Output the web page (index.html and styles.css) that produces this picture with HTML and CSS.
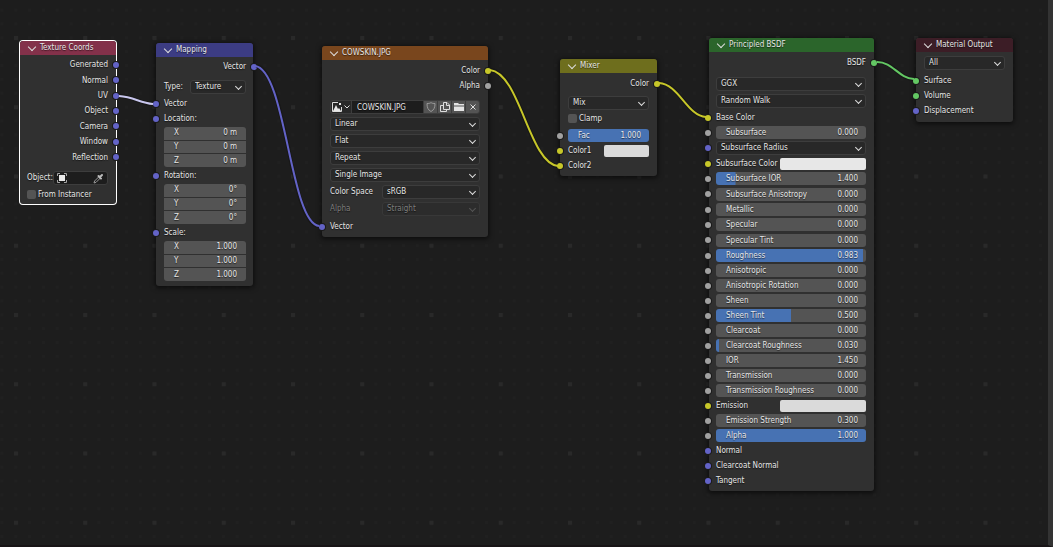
FILE: index.html
```html
<!DOCTYPE html>
<html lang="en">
<head>
  <meta charset="UTF-8">
  <meta name="viewport" content="width=device-width, initial-scale=1.0">
  <title>Shader Editor</title>
  <link rel="stylesheet" href="styles.css">
</head>
<body>
  <main class="canvas">
    <svg class="backdrop" aria-hidden="true">
      <defs>
        <pattern id="minor" x="14.2" y="36.3" width="13.85" height="13.85" patternUnits="userSpaceOnUse">
          <rect width="3" height="3" fill="#202020"/>
        </pattern>
        <pattern id="major" x="14" y="36" width="69.25" height="69.25" patternUnits="userSpaceOnUse">
          <rect width="4" height="4" fill="#292929"/>
        </pattern>
      </defs>
      <rect width="100%" height="100%" fill="url(#minor)"/>
      <rect width="100%" height="100%" fill="url(#major)"/>
    </svg>

    <section class="node selected" id="texture-coords">
      <h2 class="title red">Texture Coords</h2>
      <div class="body">
        <div class="outputs">
          <div class="row out vector">Generated</div>
          <div class="row out vector">Normal</div>
          <div class="row out vector">UV</div>
          <div class="row out vector">Object</div>
          <div class="row out vector">Camera</div>
          <div class="row out vector">Window</div>
          <div class="row out vector">Reflection</div>
        </div>
        <div class="split object-row">
          <span>Object:</span>
          <button class="picker" aria-label="Pick object">
            <svg width="10" height="10" viewBox="0 0 10 10"><path d="M.5 3V.5H3M7 .5h2.500V3M9.500 7v2.500H7M3 9.500H.5V7" fill="none" stroke="#a5a5a5"/><rect x="2" y="2" width="6" height="6" fill="#e8e8e8"/></svg>
            <svg width="11" height="11" viewBox="0 0 11 11"><path d="M1 10l.6-2L6 3.600 7.400 5 3 9.400z" fill="none" stroke="#999"/><path d="M5.500 3l2.500 2.500M7 4L9 2" fill="none" stroke="#bbb" stroke-width="2" stroke-linecap="round"/></svg>
          </button>
        </div>
        <label class="check"><input type="checkbox">From Instancer</label>
      </div>
    </section>

    <section class="node" id="mapping">
      <h2 class="title blue">Mapping</h2>
      <div class="body">
        <div class="row out vector">Vector</div>
        <div class="split type-row">
          <label for="type">Type:</label>
          <div class="drop"><select id="type"><option>Texture</option></select></div>
        </div>
        <div class="row in vector">Vector</div>
        <div class="row in vector">Location:</div>
        <div class="fields">
          <label>X<input type="text" value="0 m"></label>
          <label>Y<input type="text" value="0 m"></label>
          <label>Z<input type="text" value="0 m"></label>
        </div>
        <div class="row in vector">Rotation:</div>
        <div class="fields">
          <label>X<input type="text" value="0°"></label>
          <label>Y<input type="text" value="0°"></label>
          <label>Z<input type="text" value="0°"></label>
        </div>
        <div class="row in vector">Scale:</div>
        <div class="fields">
          <label>X<input type="text" value="1.000"></label>
          <label>Y<input type="text" value="1.000"></label>
          <label>Z<input type="text" value="1.000"></label>
        </div>
      </div>
    </section>

    <section class="node" id="image">
      <h2 class="title orange">COWSKIN.JPG</h2>
      <div class="body">
        <div class="row out color">Color</div>
        <div class="row out value">Alpha</div>
        <div class="options">
          <div class="image-bar">
            <button class="browse" aria-label="Browse image">
              <svg width="10" height="10" viewBox="0 0 10 10"><path d="M9.500 5V9.500H.5V.5H6" fill="none" stroke="#ddd"/><path d="M1 9l3-6 2 4 1-1 2 3z" fill="#e8e8e8"/><rect x="7" y="1" width="2" height="2" fill="#e8e8e8"/></svg>
              <svg width="6" height="4" viewBox="0 0 6 4"><path d="M.5.5L3 3 5.500.5" fill="none" stroke="#ddd"/></svg>
            </button>
            <input type="text" value="COWSKIN.JPG" aria-label="Image name">
            <button aria-label="Fake user"><svg width="10" height="10" viewBox="0 0 10 10"><path d="M5 .5C4 1.500 2.500 1.500 1 1.500 1 5.500 2 8 5 9.500 8 8 9 5.500 9 1.500 7.500 1.500 6 1.500 5 .5z" fill="none" stroke="#999"/></svg></button>
            <button aria-label="New image"><svg width="10" height="10" viewBox="0 0 10 10"><path d="M3.500.5H7L9.500 3v4.500h-6zM6.500.5v3h3M3 3.500H.5v6h6V8" fill="none" stroke="#ddd"/></svg></button>
            <button aria-label="Open image"><svg width="10" height="10" viewBox="0 0 10 10"><path d="M0 1h4l1 1h5v1.500H0zM0 4.500h10V9H0z" fill="#e4e4e4"/></svg></button>
            <button aria-label="Unlink"><svg width="10" height="10" viewBox="0 0 10 10"><path d="M2.500 2.500l5 5M7.500 2.500l-5 5" stroke="#ddd"/></svg></button>
          </div>
          <div class="drop"><select aria-label="Interpolation"><option>Linear</option></select></div>
          <div class="drop"><select aria-label="Projection"><option>Flat</option></select></div>
          <div class="drop"><select aria-label="Extension"><option>Repeat</option></select></div>
          <div class="drop"><select aria-label="Source"><option>Single Image</option></select></div>
          <div class="split wide">
            <label for="space">Color Space</label>
            <div class="drop"><select id="space"><option>sRGB</option></select></div>
          </div>
          <div class="split wide disabled">
            <label for="alpha-mode">Alpha</label>
            <div class="drop"><select id="alpha-mode" disabled><option>Straight</option></select></div>
          </div>
        </div>
        <div class="row in vector">Vector</div>
      </div>
    </section>

    <section class="node" id="mixer">
      <h2 class="title olive">Mixer</h2>
      <div class="body">
        <div class="row out color">Color</div>
        <div class="drop blend"><select aria-label="Blend mode"><option>Mix</option></select></div>
        <label class="check"><input type="checkbox">Clamp</label>
        <div class="row in value"><label class="slider" style="--fill: 100%">Fac<input type="text" value="1.000"></label></div>
        <div class="row in color"><label for="color1">Color1</label><button class="swatch" id="color1"></button></div>
        <div class="row in color">Color2</div>
      </div>
    </section>

    <section class="node" id="principled">
      <h2 class="title green">Principled BSDF</h2>
      <div class="body">
        <div class="row out shader">BSDF</div>
        <div class="options">
          <div class="drop"><select aria-label="Distribution"><option>GGX</option></select></div>
          <div class="drop"><select aria-label="Subsurface method"><option>Random Walk</option></select></div>
        </div>
        <div class="surface">
          <div class="row in color">Base Color</div>
          <div class="row in value"><label class="slider">Subsurface<input type="text" value="0.000"></label></div>
          <div class="row in vector"><div class="drop"><select aria-label="Subsurface Radius"><option>Subsurface Radius</option></select></div></div>
          <div class="row in color"><label for="sss-color">Subsurface Color</label><button class="swatch bright" id="sss-color"></button></div>
          <div class="row in value"><label class="slider" style="--fill: 13%">Subsurface IOR<input type="text" value="1.400"></label></div>
          <div class="row in value"><label class="slider">Subsurface Anisotropy<input type="text" value="0.000"></label></div>
          <div class="row in value"><label class="slider">Metallic<input type="text" value="0.000"></label></div>
          <div class="row in value"><label class="slider">Specular<input type="text" value="0.000"></label></div>
          <div class="row in value"><label class="slider">Specular Tint<input type="text" value="0.000"></label></div>
        </div>
        <div class="row in value"><label class="slider" style="--fill: 98.3%">Roughness<input type="text" value="0.983"></label></div>
        <div class="row in value"><label class="slider">Anisotropic<input type="text" value="0.000"></label></div>
        <div class="row in value"><label class="slider">Anisotropic Rotation<input type="text" value="0.000"></label></div>
        <div class="row in value"><label class="slider">Sheen<input type="text" value="0.000"></label></div>
        <div class="row in value"><label class="slider" style="--fill: 50%">Sheen Tint<input type="text" value="0.500"></label></div>
        <div class="row in value"><label class="slider">Clearcoat<input type="text" value="0.000"></label></div>
        <div class="row in value"><label class="slider" style="--fill: 2%">Clearcoat Roughness<input type="text" value="0.030"></label></div>
        <div class="row in value"><label class="slider">IOR<input type="text" value="1.450"></label></div>
        <div class="row in value"><label class="slider">Transmission<input type="text" value="0.000"></label></div>
        <div class="row in value"><label class="slider">Transmission Roughness<input type="text" value="0.000"></label></div>
        <div class="row in color"><label for="emission">Emission</label><button class="swatch" id="emission"></button></div>
        <div class="row in value"><label class="slider">Emission Strength<input type="text" value="0.300"></label></div>
        <div class="row in value"><label class="slider" style="--fill: 100%">Alpha<input type="text" value="1.000"></label></div>
        <div class="row in vector">Normal</div>
        <div class="row in vector">Clearcoat Normal</div>
        <div class="row in vector">Tangent</div>
      </div>
    </section>

    <section class="node" id="output">
      <h2 class="title wine">Material Output</h2>
      <div class="body">
        <div class="drop target"><select aria-label="Target"><option>All</option></select></div>
        <div class="row in shader">Surface</div>
        <div class="row in shader">Volume</div>
        <div class="row in vector">Displacement</div>
      </div>
    </section>

    <svg class="wires" aria-hidden="true">
      <g class="shade">
        <path d="M120 96C134 97 140 103 152 104"/>
        <path d="M256 66C286 69 290 223 318 226"/>
        <path d="M491 70C520 73 529 163 557 166"/>
        <path d="M660 83C679 84 687 116 705 117"/>
        <path d="M878 62C893 62 898 78 913 79"/>
      </g>
      <path stroke="#c9c7ee" d="M119 96C134 97 140 103 153 104"/>
      <path stroke="#6363c7" d="M255 66C286 69 290 223 319 226"/>
      <path stroke="#c7c729" d="M490 70C520 73 529 163 558 166"/>
      <path stroke="#c7c729" d="M659 83C679 84 687 116 706 117"/>
      <path stroke="#63c763" d="M877 62C893 62 898 78 914 79"/>
    </svg>
  </main>
</body>
</html>
```

FILE: styles.css
```css
* {
  box-sizing: border-box;
}

body {
  margin: 0;
  background: #1d1d1d;
  color: #e6e6e6;
  font: 8px/15px "DejaVu Sans Condensed", "DejaVu Sans", sans-serif;
  white-space: nowrap;
}

input, select, button {
  margin: 0;
  padding: 0;
  border: 0;
  background: none;
  color: inherit;
  font: inherit;
  text-shadow: inherit;
  outline: none;
}

.canvas {
  position: relative;
  min-height: 100vh;
  overflow: hidden;
  border-right: 5px solid #333;
  border-bottom: 2px solid #181416;
}

.backdrop, .wires {
  position: absolute;
  top: 0;
  left: 0;
  width: 100%;
  height: 100%;
}

.wires {
  fill: none;
  stroke-width: 2;
  pointer-events: none;
}

.shade {
  stroke: #141414;
  stroke-width: 4;
  opacity: 0.6;
}

/* nodes */
.node {
  position: absolute;
  width: 97px;
  background: #303030;
  border-radius: 3px;
  box-shadow: 0 1px 5px 1px rgba(0, 0, 0, 0.6);
  text-shadow: 0 1px 1px rgba(0, 0, 0, 0.6);
}

#texture-coords { left: 20px; top: 41px; width: 96px; }
#mapping { left: 156px; top: 43px; }
#image { left: 322px; top: 46px; width: 166px; }
#mixer { left: 560px; top: 59px; }
#principled { left: 709px; top: 38px; width: 165px; }
#output { left: 916px; top: 38px; }

.node.selected { box-shadow: 0 0 0 1px #fff; }

.title {
  display: flex;
  align-items: center;
  gap: 5px;
  height: 14px;
  margin: 0;
  padding: 0 0 1px 9px;
  border-radius: 3px 3px 0 0;
  font-size: 8px;
  font-weight: normal;
}

.title::before, .drop::after {
  content: "";
  width: 5px;
  height: 5px;
  border: solid #ddd;
  border-width: 0 1px 1px 0;
  transform: translateY(-1px) rotate(45deg);
}

.red { background: #83314a; }
.blue { background: #3c3c83; }
.orange { background: #79461d; }
.olive { background: #6e6e1d; }
.green { background: #2b652b; }
.wine { background: #3c1d26; }

.body {
  padding: 3px 8px;
}

#texture-coords .body { padding: 2px 8px 2px 7px; }
#mapping .body { padding: 2px 7px 4px 8px; }
#principled .body { padding-left: 7px; }
#output .body { padding-bottom: 4px; }

/* sockets sit on the edge of the node */
.row {
  position: relative;
  display: flex;
  align-items: center;
  height: 15px;
}

.out { justify-content: flex-end; }

.row::before {
  content: "";
  position: absolute;
  width: 6px;
  height: 6px;
  border-radius: 50%;
  background: #a1a1a1;
  box-shadow: 0 0 0 1px #1a1a1a;
}

.in::before { left: -11px; }
.out::before { right: -11px; }
.vector::before { background: #6363c7; }
.color::before { background: #c7c729; }
.shader::before { background: #63c763; }

.outputs, .surface {
  display: grid;
  grid-auto-rows: 1fr;
}

.outputs { height: 108px; }
.outputs .row, .surface .row { height: auto; }
.surface { height: 138px; }

/* widgets */
.drop {
  position: relative;
  display: flex;
  width: 100%;
  height: 14px;
  background: #282828;
  border: 1px solid #3d3d3d;
  border-radius: 3px;
}

.drop select {
  width: 100%;
  padding-left: 4px;
  line-height: 12px;
  appearance: none;
}

.drop::after {
  position: absolute;
  right: 4px;
  top: 4px;
  width: 4px;
  height: 4px;
}

.split {
  display: grid;
  grid-template-columns: 26px 1fr;
  line-height: 14px;
}

.wide { grid-template-columns: 52px 1fr; }
.disabled { color: #7d7d7d; }
.disabled .drop { border-color: #383838; background: #2c2c2c; }
.disabled select { opacity: 1; }
.disabled .drop::after { border-color: #555; }

.object-row { margin: 6px 0 1px; }
.type-row { margin: 6px 0 2px; }
.blend { margin-top: 5px; }
.target { margin: 1px 0 3px; }

.options {
  display: grid;
  gap: 3px;
  margin: 7px 0 3px;
}

#principled .options { margin-bottom: 2px; }

.picker {
  display: flex;
  justify-content: space-between;
  align-items: center;
  height: 14px;
  padding: 0 3px;
  background: #1d1d1d;
  border: 1px solid #3d3d3d;
  border-radius: 3px;
}

.check {
  display: flex;
  align-items: center;
  gap: 2px;
  height: 16px;
}

#mixer .check { margin-bottom: 2px; }

.check input {
  width: 9px;
  height: 9px;
  background: #545454;
  border-radius: 2px;
  appearance: none;
}

.fields {
  display: grid;
  grid-template-rows: repeat(3, 1fr);
  gap: 1px;
  margin: 1px 0;
  height: 40px;
  border-radius: 3px;
  line-height: 12px;
  overflow: hidden;
}

.fields label {
  display: flex;
  align-items: center;
  padding: 0 9px 0 10px;
  background: #545454;
}

.fields input, .slider input {
  flex: 1;
  width: 0;
  text-align: right;
}

.slider {
  display: flex;
  align-items: center;
  width: 100%;
  height: 13px;
  padding: 0 8px 0 10px;
  background: linear-gradient(#4772b3, #4772b3) 0 0 / var(--fill, 0%) 100% no-repeat #545454;
  border-radius: 3px;
}

.swatch {
  width: 45px;
  height: 12px;
  margin-left: auto;
  background: #dadada;
  border-radius: 2px;
}

#principled .swatch { width: 86px; }
#principled .bright { background: #e7e7e7; }

.image-bar {
  display: flex;
  gap: 1px;
  height: 14px;
  border: 1px solid #3d3d3d;
  border-radius: 3px;
  background: #3d3d3d;
  overflow: hidden;
}

.image-bar button {
  display: flex;
  justify-content: center;
  align-items: center;
  width: 13px;
  background: #545454;
}

.image-bar .browse {
  gap: 2px;
  width: 20px;
  background: #282828;
}

.image-bar input {
  flex: 1;
  min-width: 0;
  padding-left: 5px;
  background: #1d1d1d;
}
```
